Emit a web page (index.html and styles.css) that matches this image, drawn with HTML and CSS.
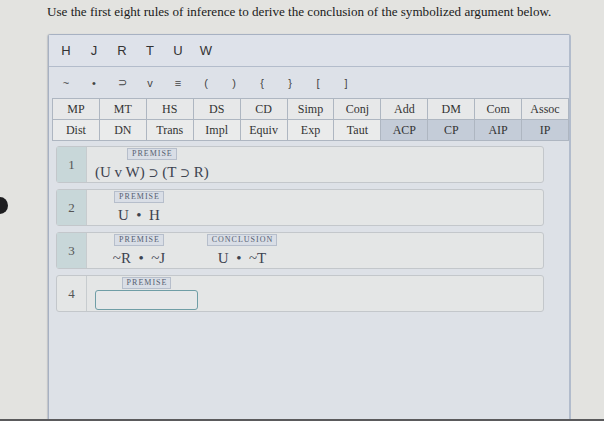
FILE: index.html
```html
<!DOCTYPE html>
<html>
<head>
<meta charset="utf-8">
<link rel="stylesheet" href="styles.css">
</head>
<body>
<div class="page">
  <p class="title">Use the first eight rules of inference to derive the conclusion of the symbolized argument below.</p>
  <div class="panel">
    <div class="letters">
      <span class="key">H</span><span class="key">J</span><span class="key">R</span><span class="key">T</span><span class="key">U</span><span class="key">W</span>
    </div>
    <div class="symbols">
      <span class="key">~</span><span class="key">•</span><span class="key">⊃</span><span class="key">v</span><span class="key">≡</span><span class="key">(</span><span class="key">)</span><span class="key">{</span><span class="key">}</span><span class="key">[</span><span class="key">]</span>
    </div>
    <div class="rules">
      <div class="rule">MP</div><div class="rule">MT</div><div class="rule">HS</div><div class="rule">DS</div><div class="rule">CD</div><div class="rule">Simp</div><div class="rule">Conj</div><div class="rule">Add</div><div class="rule">DM</div><div class="rule">Com</div><div class="rule">Assoc</div>
      <div class="rule r2">Dist</div><div class="rule r2">DN</div><div class="rule r2">Trans</div><div class="rule r2">Impl</div><div class="rule r2">Equiv</div><div class="rule r2">Exp</div><div class="rule r2">Taut</div><div class="rule r2 dark">ACP</div><div class="rule r2 dark">CP</div><div class="rule r2 dark">AIP</div><div class="rule r2 dark">IP</div>
    </div>
    <div class="proof">
      <div class="line">
        <div class="num filled">1</div>
        <div class="content">
          <div class="stmt"><span class="label">PREMISE</span><span class="formula">(U v W) <span class="op">⊃</span> (T <span class="op">⊃</span> R)</span></div>
        </div>
      </div>
      <div class="line">
        <div class="num filled">2</div>
        <div class="content">
          <div class="stmt"><span class="label">PREMISE</span><span class="formula">U  •  H</span></div>
        </div>
      </div>
      <div class="line">
        <div class="num filled">3</div>
        <div class="content">
          <div class="stmt"><span class="label">PREMISE</span><span class="formula">~R  •  ~J</span></div>
          <div class="stmt concl"><span class="label">CONCLUSION</span><span class="formula">U  •  ~T</span></div>
        </div>
      </div>
      <div class="line">
        <div class="num">4</div>
        <div class="content">
          <div class="stmt"><span class="label">PREMISE</span><span class="input"></span></div>
        </div>
      </div>
    </div>
  </div>
  <div class="blob"></div>
  <div class="edge"></div>
</div>
</body>
</html>
```
FILE: styles.css
```css
html, body {
  margin: 0;
  padding: 0;
  width: 604px;
  height: 421px;
  overflow: hidden;
}
body {
  background: #e3e3e0;
  font-family: "Liberation Serif", "DejaVu Serif", serif;
  color: #222;
}
.page {
  position: relative;
  width: 604px;
  height: 421px;
}
.title {
  margin: 0;
  padding: 4px 0 0 47px;
  font-size: 13.1px;
  line-height: 16px;
  color: #1a1a1a;
  white-space: nowrap;
}
.panel {
  margin: 14px 0 0 48px;
  width: 520px;
  height: 400px;
  border: 1px solid #a7b1c2;
  border-right: 2px solid #b2bccc;
  border-radius: 3px 3px 0 0;
  background: #dde1e7;
  box-shadow: -1px 0 1px rgba(90,100,120,0.25);
}
.letters, .symbols {
  display: flex;
  padding-left: 3px;
  font-family: "Liberation Sans", Arial, sans-serif;
  color: #333;
}
.letters {
  height: 31px;
  align-items: center;
  font-size: 13px;
  border-bottom: 1px solid #b3bccb;
  background: #dee2ea;
}
.symbols {
  height: 31px;
  align-items: center;
  font-size: 11px;
  color: #444;
  background: #dde1e8;
}
.key {
  width: 28px;
  text-align: center;
}
.rules {
  display: grid;
  grid-template-columns: repeat(11, 1fr);
  margin-left: 3px;
  width: 516px;
  border-top: 1px solid #aeb6c1;
  border-left: 1px solid #aeb6c1;
}
.rule {
  height: 21px;
  line-height: 20px;
  text-align: center;
  font-size: 12px;
  color: #333;
  background: #e7e8e9;
  border-right: 1px solid #aeb6c1;
  border-bottom: 1px solid #aeb6c1;
  box-sizing: border-box;
}
.rule.r2 {
  background: #eaebeb;
}
.rule.dark {
  background: #c4ccd8;
}
.proof {
  display: flex;
  flex-direction: column;
  gap: 6px;
  margin: 5px 0 0 7px;
  width: 488px;
}
.line {
  display: flex;
  height: 37px;
  border: 1px solid #c3c7cb;
  border-radius: 3px;
  background: #e4e6e6;
  box-sizing: border-box;
}
.num {
  width: 29px;
  display: flex;
  align-items: center;
  justify-content: center;
  font-size: 13px;
  color: #555;
  border-right: 1px solid #c7cccf;
}
.num.filled {
  background: #c8d7d9;
}
.content {
  display: flex;
  gap: 15px;
  padding-left: 8px;
}
.stmt {
  display: flex;
  flex-direction: column;
  align-items: center;
  min-width: 88px;
}
.label {
  margin-top: 1px;
  height: 10px;
  line-height: 10px;
  padding: 0 3px 0 4px;
  font-size: 8px;
  letter-spacing: 1px;
  color: #556070;
  background: #d9dee6;
  border: 1px solid #b6becb;
}
.formula {
  margin-top: 2px;
  font-size: 15px;
  line-height: 20px;
  color: #3d4350;
  white-space: pre;
}
.op {
  font-size: 12px;
}
.input {
  margin-top: 1px;
  width: 101px;
  height: 18px;
  border: 1px solid #6f9ea6;
  border-radius: 3px;
  background: #e6e8e9;
}
.blob {
  position: absolute;
  left: -8px;
  top: 197px;
  width: 16px;
  height: 17px;
  border-radius: 50%;
  background: #1e1e20;
}
.edge {
  position: absolute;
  left: 0;
  bottom: 0;
  width: 604px;
  height: 2px;
  background: #5a5a5c;
}
```
